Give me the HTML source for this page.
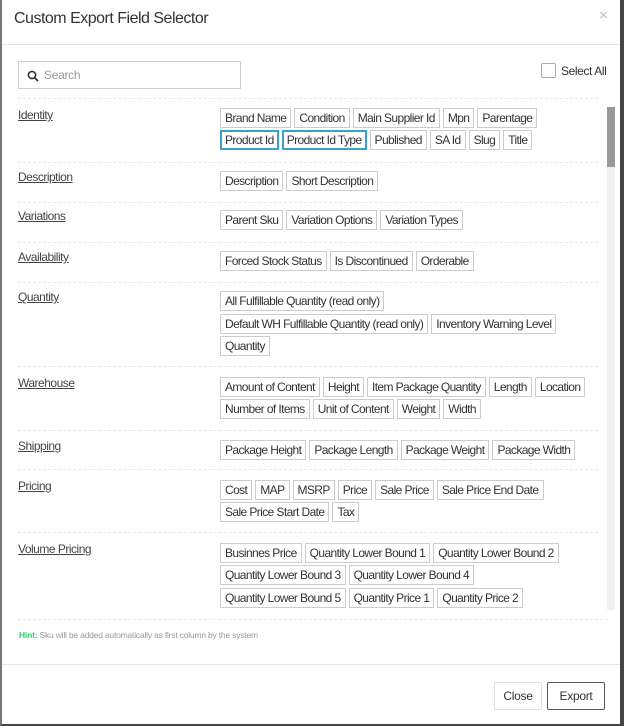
<!DOCTYPE html>
<html><head><meta charset="utf-8"><style>
*{box-sizing:border-box;margin:0;padding:0}
html,body{width:624px;height:726px;overflow:hidden;background:#fff;font-family:"Liberation Sans",Arial,sans-serif;color:#333}
.frame{position:absolute;left:0;top:0;width:624px;height:726px;border-left:2px solid #777;border-right:4px solid #444;border-bottom:2px solid #444;background:#fff}
.in{position:absolute;left:-2px;top:0;width:624px;height:726px}
.title{position:absolute;left:14px;top:10px;font-size:16px;color:#333;letter-spacing:-0.5px}
.x{position:absolute;left:599px;top:7px;font-size:15px;color:#bbb}
.hr{position:absolute;left:2px;right:4px;height:1px;background:#e5e5e5}
.search{position:absolute;left:18px;top:61px;width:223px;height:28px;border:1px solid #ccc}
.search span{position:absolute;left:25px;top:6px;font-size:12px;color:#999;letter-spacing:-0.3px}
.cb{position:absolute;left:541px;top:63px;width:15px;height:15px;border:1px solid #aaa;border-radius:2px}
.sa{position:absolute;left:561px;top:64px;font-size:12px;color:#333;letter-spacing:-0.4px}
.dash{position:absolute;left:18px;width:580px;border-top:1px dashed #e8e8e8}
.lbl{position:absolute;left:18px;font-size:12px;color:#444;text-decoration:underline;letter-spacing:-0.5px}
.row{position:absolute;left:220px;display:flex;gap:3px;white-space:nowrap}
.t{height:20px;border:1px solid #ccc;padding:0 4px;font-size:12px;line-height:18px;color:#333;letter-spacing:-0.6px;background:#fff}
.sel{border:2px solid #3aa0c8;line-height:16px;padding:0 3px}
.sb{position:absolute;left:607px;top:107px;width:8px;height:503px;background:#f0f0f0}
.sb i{position:absolute;left:0;top:0;width:8px;height:60px;background:#999}
.hint{position:absolute;left:19px;top:630px;font-size:8.5px;color:#999;letter-spacing:-0.2px}
.hint b{color:#2ecc71}
.btn{position:absolute;top:682px;height:28px;font-size:12px;line-height:26px;text-align:center;color:#333;border-radius:2px;letter-spacing:-0.3px}
</style></head><body><div class="frame"><div class="in">
<div class="title">Custom Export Field Selector</div>
<div class="x">×</div>
<div class="hr" style="top:44px"></div>
<div class="search"><svg style="position:absolute;left:8px;top:8px" width="12" height="12" viewBox="0 0 12 12"><circle cx="5" cy="5" r="3.6" fill="none" stroke="#333" stroke-width="1.6"/><path d="M7.6 7.6L11 11" stroke="#333" stroke-width="1.8"/></svg><span>Search</span></div>
<div class="cb"></div><div class="sa">Select All</div>
<div class="dash" style="top:98px"></div>
<div class="sb"><i></i></div>

<div class="lbl" style="top:108px">Identity</div>
<div class="row" style="top:108px"><span class="t">Brand Name</span><span class="t">Condition</span><span class="t">Main Supplier Id</span><span class="t">Mpn</span><span class="t">Parentage</span></div>
<div class="row" style="top:130px"><span class="t sel">Product Id</span><span class="t sel">Product Id Type</span><span class="t">Published</span><span class="t">SA Id</span><span class="t">Slug</span><span class="t">Title</span></div>
<div class="dash" style="top:162px"></div>

<div class="lbl" style="top:170px">Description</div>
<div class="row" style="top:171px"><span class="t">Description</span><span class="t">Short Description</span></div>
<div class="dash" style="top:202px"></div>

<div class="lbl" style="top:209px">Variations</div>
<div class="row" style="top:210px"><span class="t">Parent Sku</span><span class="t">Variation Options</span><span class="t">Variation Types</span></div>
<div class="dash" style="top:242px"></div>

<div class="lbl" style="top:250px">Availability</div>
<div class="row" style="top:251px"><span class="t">Forced Stock Status</span><span class="t">Is Discontinued</span><span class="t">Orderable</span></div>
<div class="dash" style="top:282px"></div>

<div class="lbl" style="top:290px">Quantity</div>
<div class="row" style="top:291px"><span class="t">All Fulfillable Quantity (read only)</span></div>
<div class="row" style="top:314px"><span class="t">Default WH Fulfillable Quantity (read only)</span><span class="t">Inventory Warning Level</span></div>
<div class="row" style="top:336px"><span class="t">Quantity</span></div>
<div class="dash" style="top:366px"></div>

<div class="lbl" style="top:376px">Warehouse</div>
<div class="row" style="top:377px"><span class="t">Amount of Content</span><span class="t">Height</span><span class="t">Item Package Quantity</span><span class="t">Length</span><span class="t">Location</span></div>
<div class="row" style="top:399px"><span class="t">Number of Items</span><span class="t">Unit of Content</span><span class="t">Weight</span><span class="t">Width</span></div>
<div class="dash" style="top:430px"></div>

<div class="lbl" style="top:439px">Shipping</div>
<div class="row" style="top:440px"><span class="t">Package Height</span><span class="t">Package Length</span><span class="t">Package Weight</span><span class="t">Package Width</span></div>
<div class="dash" style="top:469px"></div>

<div class="lbl" style="top:479px">Pricing</div>
<div class="row" style="top:480px"><span class="t">Cost</span><span class="t">MAP</span><span class="t">MSRP</span><span class="t">Price</span><span class="t">Sale Price</span><span class="t">Sale Price End Date</span></div>
<div class="row" style="top:502px"><span class="t">Sale Price Start Date</span><span class="t">Tax</span></div>
<div class="dash" style="top:532px"></div>

<div class="lbl" style="top:542px">Volume Pricing</div>
<div class="row" style="top:543px"><span class="t">Businnes Price</span><span class="t">Quantity Lower Bound 1</span><span class="t">Quantity Lower Bound 2</span></div>
<div class="row" style="top:565px"><span class="t">Quantity Lower Bound 3</span><span class="t">Quantity Lower Bound 4</span></div>
<div class="row" style="top:588px"><span class="t">Quantity Lower Bound 5</span><span class="t">Quantity Price 1</span><span class="t">Quantity Price 2</span></div>
<div class="dash" style="top:619px;width:590px"></div>

<div class="hint"><b>Hint:</b> Sku will be added automatically as first column by the system</div>
<div class="hr" style="top:664px"></div>
<div class="btn" style="left:494px;width:48px;border:1px solid #ddd">Close</div>
<div class="btn" style="left:547px;width:58px;border:1px solid #555">Export</div>
</div></div></body></html>
